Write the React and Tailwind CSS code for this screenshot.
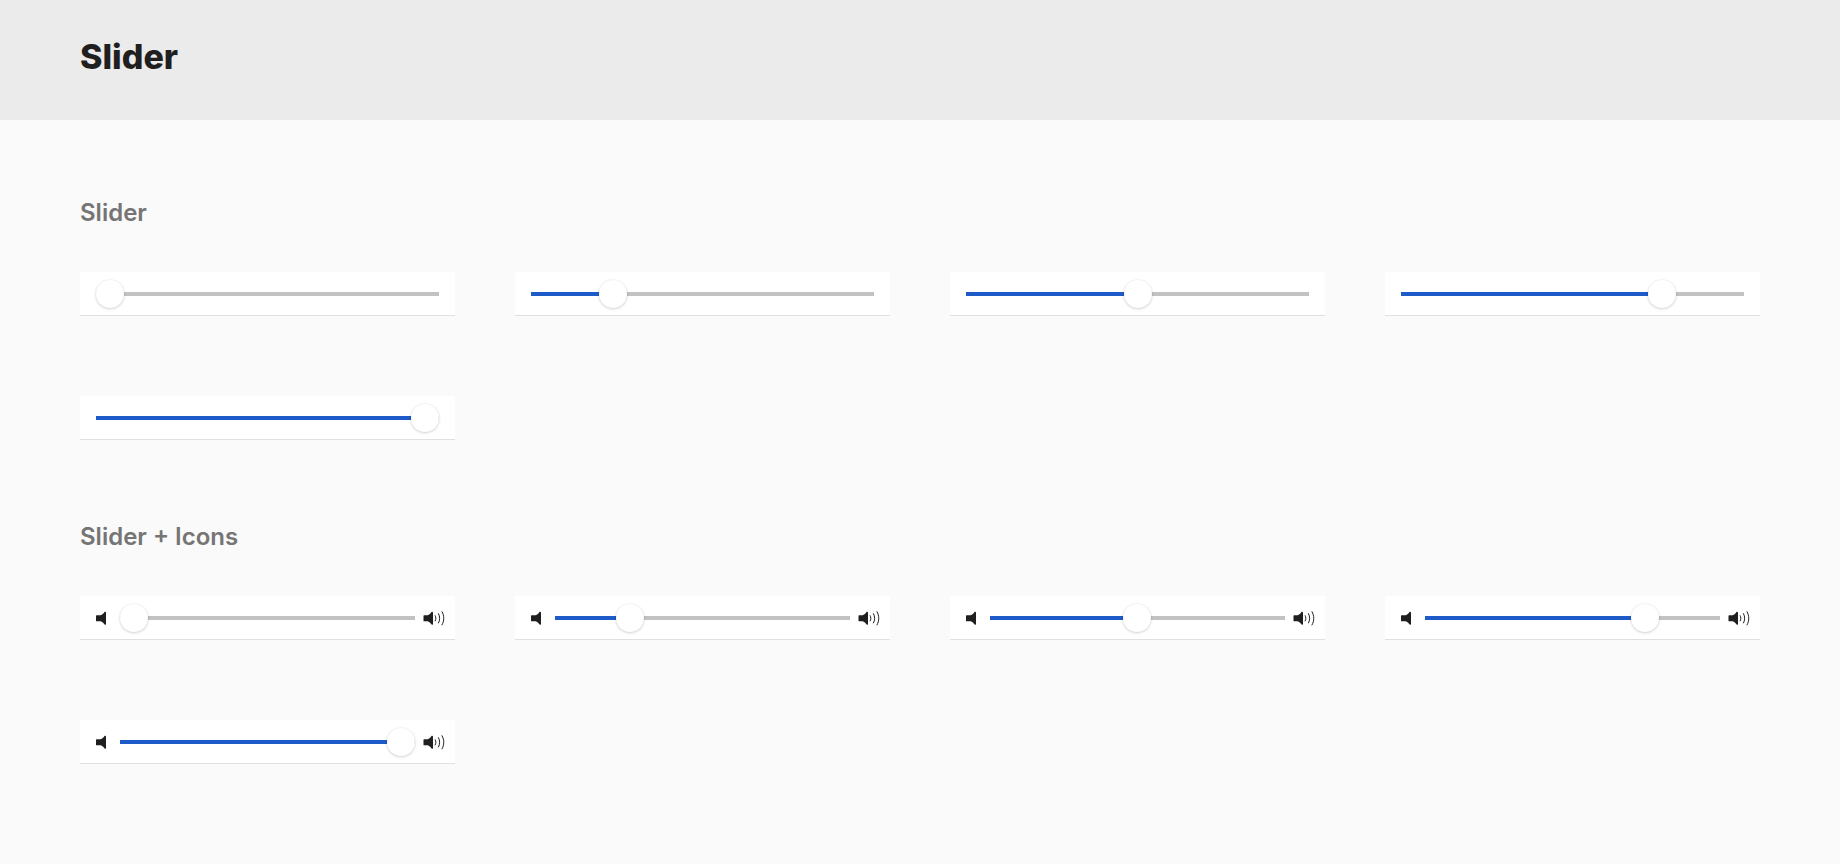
import { useState } from "react";

const sliders = [
  { id: "slider-0", label: "Slider at minimum", value: 0 },
  { id: "slider-25", label: "Slider at a quarter", value: 21.6 },
  { id: "slider-50", label: "Slider at half", value: 50 },
  { id: "slider-75", label: "Slider at three quarters", value: 78.4 },
  { id: "slider-100", label: "Slider at maximum", value: 100 },
];

const iconSliders = [
  { id: "volume-0", label: "Volume at minimum", value: 0 },
  { id: "volume-25", label: "Volume at a quarter", value: 22.8 },
  { id: "volume-50", label: "Volume at half", value: 49.8 },
  { id: "volume-75", label: "Volume at three quarters", value: 77.2 },
  { id: "volume-100", label: "Volume at maximum", value: 100 },
];

const VolumeLow = () => (
  <svg className="h-6 w-6 shrink-0 text-[#1f1f1f]" viewBox="0 0 24 24" fill="currentColor" aria-hidden="true">
    <path d="M8.600 9.300h4c1.700-.4 2.900-1.700 3.700-3 .5-.8 1.700-.6 1.700.4v11.200c0 1-1.200 1.200-1.700.4-.8-1.300-2-2.600-3.700-3h-4c-.4 0-.6-.3-.6-.6V9.900c0-.3.2-.6.6-.6z" />
  </svg>
);

const VolumeHigh = () => (
  <svg className="h-6 w-6 shrink-0 text-[#1f1f1f]" viewBox="0 0 24 24" fill="none" aria-hidden="true">
    <path
      fill="currentColor"
      d="M1.100 9.300h3.500c1.700-.4 2.900-1.700 3.700-3 .5-.8 1.700-.6 1.700.4v11.200c0 1-1.200 1.200-1.700.4-.8-1.300-2-2.600-3.700-3H1.100c-.4 0-.6-.3-.6-.6V9.900c0-.3.2-.6.6-.6z"
    />
    <path
      stroke="currentColor"
      strokeLinecap="round"
      d="M12.200 9.700c.9 1.600.9 3.600 0 5.200M15.500 7.700c1.600 2.800 1.600 6.400 0 9.200M19 5.700c2.400 4 2.400 9.200 0 13.200"
    />
  </svg>
);

const Range = ({ id, label, initial }) => {
  const [value, setValue] = useState(initial);

  return (
    <input
      id={id}
      type="range"
      aria-label={label}
      min="0"
      max="100"
      step="any"
      value={value}
      onChange={(e) => setValue(Number(e.target.value))}
      style={{ "--fill": `${value}%` }}
      className="block h-7 w-full min-w-0 flex-1 cursor-pointer appearance-none bg-transparent [&::-webkit-slider-runnable-track]:h-1 [&::-webkit-slider-runnable-track]:bg-[linear-gradient(to_right,#1e5ac8_var(--fill),#c2c2c2_var(--fill))] [&::-webkit-slider-thumb]:-mt-3 [&::-webkit-slider-thumb]:size-7 [&::-webkit-slider-thumb]:appearance-none [&::-webkit-slider-thumb]:rounded-full [&::-webkit-slider-thumb]:bg-white [&::-webkit-slider-thumb]:shadow-[0_0_2px_rgba(0,0,0,0.08),0_1px_3px_rgba(0,0,0,0.16)]"
    />
  );
};

const Card = ({ item, icons }) => (
  <div
    className={`flex h-11 items-start gap-2 border-b border-[#e0e0e0] bg-white pt-2 ${
      icons ? "px-2" : "px-4"
    }`}
  >
    {icons && <div className="pt-[2px]"><VolumeLow /></div>}
    <Range id={item.id} label={item.label} initial={item.value} />
    {icons && <div className="pt-[2px]"><VolumeHigh /></div>}
  </div>
);

const Section = ({ title, items, icons = false }) => (
  <section>
    <h2 className="text-2xl leading-[34px] font-semibold text-[#757575]">{title}</h2>
    <div className="mt-[42px] grid grid-cols-4 gap-x-15 gap-y-20">
      {items.map((item) => (
        <Card key={item.id} item={item} icons={icons} />
      ))}
    </div>
  </section>
);

const App = () => {
  return (
    <div className="min-h-screen bg-[#fafafa] font-['Inter',sans-serif]">
      <header className="bg-[#ebebeb] px-20 pt-9 pb-[42px]">
        <h1 className="text-[34px] leading-[42px] font-extrabold text-[#1f1f1f]">Slider</h1>
      </header>
      <main className="flex flex-col gap-20 px-20 pt-19 pb-20">
        <Section title="Slider" items={sliders} />
        <Section title="Slider + Icons" items={iconSliders} icons />
      </main>
    </div>
  );
};

export default App;
